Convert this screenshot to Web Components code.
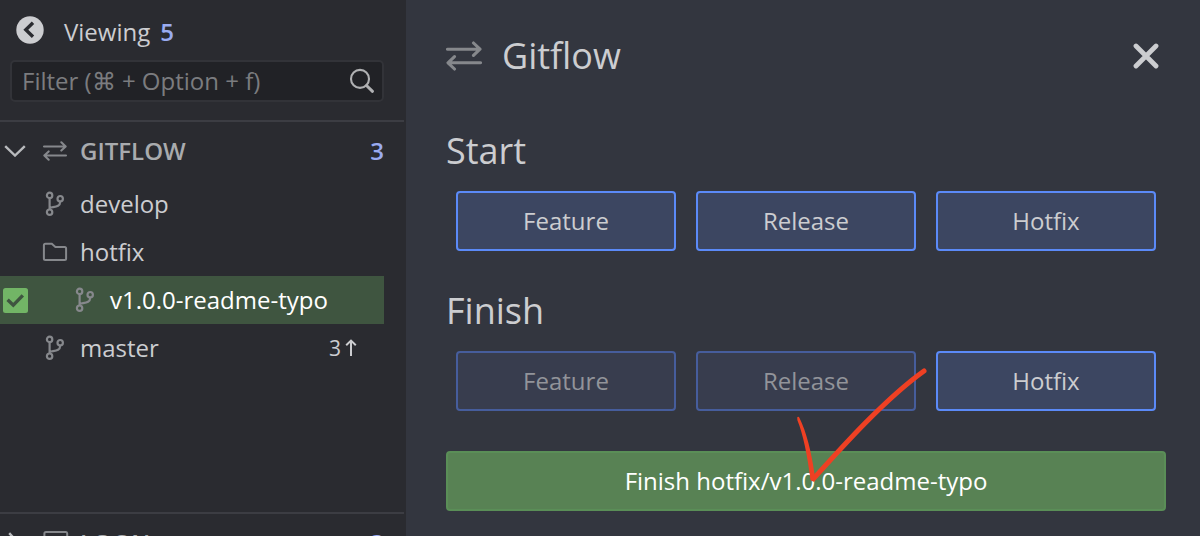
<!DOCTYPE html>
<html lang="en">
<head>
<meta charset="utf-8">
<title>Gitflow</title>
<style>
    html, body {
        margin: 0;
        height: 100%;
        overflow: hidden;
    }

    body {
        font: 24px/1 "Open Sans", "Noto Sans", sans-serif;
        color: #cccdd0;
        background: #33363f;
        --accent: #9aabf0;
        --muted: #86888c;
        --line: #3c3d43;
    }
</style>
</head>
<body>
<gitflow-app></gitflow-app>

<script>
// Icon markup, each with its own viewBox
const icons = {
    back: ['0 0 28 28', '<circle cx="14" cy="14" r="13.7" fill="currentColor"/><path d="M17 6.8 9.8 13.8l7.2 7" fill="none" stroke="#2a2b30" stroke-width="3.4"/>'],
    search: ['0 0 26 26', '<circle cx="11" cy="10.9" r="9" fill="none" stroke="currentColor" stroke-width="2.1"/><path d="m17.5 17.5 6 5.8" fill="none" stroke="currentColor" stroke-width="3" stroke-linecap="round"/>'],
    down: ['0 0 22 12', '<path d="m1.2 1.2 9.8 9.3 9.8-9.3" fill="none" stroke="currentColor" stroke-width="2.4"/>'],
    right: ['0 0 12 22', '<path d="m1.2 1.2 9.3 9.8-9.3 9.8" fill="none" stroke="currentColor" stroke-width="2.4"/>'],
    flow: ['0 0 36 30', '<path d="M1.5 8.2h32M27.5 2l6.5 6.2-6.5 6.2M34.5 21.8h-32M8.5 15.6 2 21.8 8.5 28" fill="none" stroke="currentColor" stroke-width="3.1" stroke-linecap="round" stroke-linejoin="round"/>'],
    branch: ['0 0 20 26', '<g fill="none" stroke="currentColor" stroke-width="2.2"><circle cx="4.6" cy="4.4" r="2.7"/><circle cx="4.6" cy="21.2" r="2.7"/><circle cx="15.2" cy="7.7" r="2.7"/><path d="M4.6 7.2v11.2M15.2 10.5c0 6-6 5-10.6 6.4"/></g>'],
    folder: ['0 0 26 20', '<path d="M1.9 3.2q0-1.5 1.5-1.5h6.4l3.6 3.2h9.2q1.5 0 1.5 1.5v10.2q0 1.5-1.5 1.5H3.4q-1.5 0-1.5-1.5z" fill="none" stroke="currentColor" stroke-width="2"/>'],
    monitor: ['0 0 26 24', '<path d="M3 1h20q1.2 0 1.2 1.6v13.8q0 1.6-1.6 1.6H3q-1.6 0-1.6-1.6V2.6Q1.4 1 3 1zM8 23h10M13 18v5" fill="none" stroke="currentColor" stroke-width="2"/>'],
    check: ['0 0 25 25', '<rect width="25" height="25" rx="2.5" fill="#72b566"/><path d="m4.6 11.8 5.7 5.4 9.5-9.8" fill="none" stroke="#3f5540" stroke-width="3.4"/>'],
    up: ['0 0 12 18', '<path d="M6 17V2M1.2 6.3 6 1.6l4.8 4.7" fill="none" stroke="currentColor" stroke-width="2"/>'],
    close: ['0 0 26 26', '<path d="m3 3 20 20M23 3 3 23" fill="none" stroke="currentColor" stroke-width="4.8" stroke-linecap="round"/>'],
    tick: ['0 0 136 116', '<path d="M5.2 49.6c.4-1.4 1.6-1.1 2.2.2C14.5 64 19.5 85 22.2 104l1.5 7.5c-2 2.4-5.4 1.8-5.5-1.5C15.5 88 11 66 5.4 52.200z" fill="#ef4023"/><path d="M21.300 111C50 79 93 31 132 3" fill="none" stroke="#ef4023" stroke-width="5" stroke-linecap="round"/>']
};

// Attach an open shadow root and fill it
function mount(el, css, html) {
    el.attachShadow({ mode: 'open' }).innerHTML = `<style>* { box-sizing: border-box; } ${css}</style>${html}`;
}

class UiIcon extends HTMLElement {
    constructor() {
        super();
        const [viewBox, shape] = icons[this.getAttribute('name')];
        const [, , w, h] = viewBox.split(' ');
        const width = this.getAttribute('width') || w;
        mount(this, `
            :host { display: block; flex: none; }
            svg { display: block; }
        `, `<svg width="${width}" height="${width * h / w}" viewBox="${viewBox}">${shape}</svg>`);
    }
}

// Search box with a placeholder text
class FilterBox extends HTMLElement {
    constructor() {
        super();
        mount(this, `
            :host {
                box-sizing: border-box;
                display: flex;
                flex: none;
                align-items: center;
                justify-content: space-between;
                height: 42px;
                padding: 0 7px 0 10px;
                border: 2px solid #323338;
                border-radius: 5px;
                background: #212226;
                color: #7b7c7f;
            }
            ui-icon { color: #b0b1b3; }
        `, `<span><slot></slot></span><ui-icon name="search"></ui-icon>`);
    }
}

// Collapsible section title: chevron, icon, name, count
class SectionHead extends HTMLElement {
    constructor() {
        super();
        const open = this.hasAttribute('open');
        mount(this, `
            :host {
                box-sizing: border-box;
                display: flex;
                flex: none;
                align-items: center;
                height: 60px;
                padding: 0 20px 0 4px;
                border-top: 2px solid var(--line);
                font-weight: 600;
                color: #a9abae;
            }
            .toggle { width: 39px; }
            .toggle ui-icon { margin-left: ${open ? 0 : 4}px; color: #b8babd; }
            .kind { width: 37px; color: var(--muted); }
            .name { flex: 1; }
            .count { color: var(--accent); }
        `, `
            <div class="toggle"><ui-icon name="${open ? 'down' : 'right'}"></ui-icon></div>
            <div class="kind"><ui-icon name="${this.getAttribute('icon')}" width="${this.getAttribute('icon') === 'flow' ? 24 : 26}"></ui-icon></div>
            <span class="name"><slot></slot></span>
            <span class="count">${this.getAttribute('count')}</span>
        `);
    }
}

class TreeRow extends HTMLElement {
    constructor() {
        super();
        const ahead = this.getAttribute('ahead');
        const current = this.hasAttribute('current');
        mount(this, `
            :host {
                box-sizing: border-box;
                display: flex;
                align-items: center;
                height: 48px;
                width: 384px;
                padding-left: 3px;
            }
            :host([current]) { background: #3f5540; color: #fff; }
            .mark { width: 39px; padding-top: 1px; }
            :host([current]) .mark { width: 69px; }
            .kind { width: 38px; padding-left: ${this.getAttribute('icon') === 'branch' ? 3 : 0}px; color: var(--muted); }
            .name { flex: 1; }
            .ahead { display: flex; align-items: center; gap: 4px; margin-right: 27px; font-size: 21px; }
        `, `
            <div class="mark">${current ? '<ui-icon name="check"></ui-icon>' : ''}</div>
            <div class="kind"><ui-icon name="${this.getAttribute('icon')}"></ui-icon></div>
            <span class="name"><slot></slot></span>
            ${ahead ? `<span class="ahead">${ahead}<ui-icon name="up"></ui-icon></span>` : ''}
        `);
    }
}

class SideBar extends HTMLElement {
    constructor() {
        super();
        mount(this, `
            :host {
                box-sizing: border-box;
                display: flex;
                flex-direction: column;
                flex: none;
                width: 406px;
                padding-right: 2px;
                overflow: hidden;
                background: #2a2b30;
            }
            .viewing { display: flex; flex: none; align-items: center; height: 60px; padding-left: 16px; }
            .viewing span { margin-left: 20px; padding-top: 4px; }
            .viewing b { margin-left: 10px; padding-top: 4px; font-weight: 600; color: var(--accent); }
            filter-box { margin: 0 20px 18px 10px; }
            .tree { height: 392px; flex: none; }
        `, `
            <div class="viewing"><ui-icon name="back"></ui-icon><span>Viewing</span><b>5</b></div>
            <filter-box>Filter (⌘ + Option + f)</filter-box>
            <div class="tree"><slot></slot></div>
            <slot name="next"></slot>
        `);
    }
}

class FlowButton extends HTMLElement {
    constructor() {
        super();
        mount(this, `
            :host { display: block; flex: 1; }
            button {
                display: block;
                width: 100%;
                height: 60px;
                padding: 0;
                font: inherit;
                color: inherit;
                border: 2px solid #5b8af8;
                border-radius: 4px;
                background: #3c4661;
            }
            :host([disabled]) button { border-color: #465d9c; background: #383d4e; color: #92949a; }
            :host([primary]) button { border-color: #5a8e57; background: #588254; color: #fff; }
        `, `<button><slot></slot></button>`);
    }
}

// Titled group of buttons
class ActionGroup extends HTMLElement {
    constructor() {
        super();
        mount(this, `
            :host { display: block; height: 160px; }
            h2 { margin: 0; height: 80px; font-size: 36px; line-height: 80px; font-weight: 400; }
            .buttons { display: flex; gap: 20px; padding: 0 10px; }
        `, `<h2>${this.getAttribute('heading')}</h2><div class="buttons"><slot></slot></div>`);
    }
}

class GitflowPanel extends HTMLElement {
    constructor() {
        super();
        mount(this, `
            :host { display: block; flex: 1; padding: 0 34px 0 40px; }
            header { display: flex; align-items: center; height: 111px; font-size: 36px; }
            header ui-icon { color: #86888c; }
            h1 { flex: 1; margin: 0 0 0 20px; font-size: 36px; font-weight: 400; }
            header ui-icon[name=close] { margin-right: 7px; color: #cccdd0; }
            .finish { position: relative; padding-top: 20px; }
            /* hand-drawn tick over the buttons */
            .finish > ui-icon { position: absolute; left: 346px; top: -63px; pointer-events: none; }
        `, `
            <header><ui-icon name="flow"></ui-icon><h1>Gitflow</h1><ui-icon name="close"></ui-icon></header>
            <slot></slot>
            <div class="finish"><slot name="finish"></slot><ui-icon name="tick"></ui-icon></div>
        `);
    }
}

class GitflowApp extends HTMLElement {
    constructor() {
        super();
        mount(this, `
            :host { display: flex; height: 536px; overflow: hidden; }
        `, `
            <side-bar>
                <section-head open icon="flow" count="3">GITFLOW</section-head>
                <tree-row icon="branch">develop</tree-row>
                <tree-row icon="folder">hotfix</tree-row>
                <tree-row icon="branch" current>v1.0.0-readme-typo</tree-row>
                <tree-row icon="branch" ahead="3">master</tree-row>
                <section-head slot="next" icon="monitor" count="3">LOCAL</section-head>
            </side-bar>
            <gitflow-panel>
                <action-group heading="Start">
                    <flow-button>Feature</flow-button>
                    <flow-button>Release</flow-button>
                    <flow-button>Hotfix</flow-button>
                </action-group>
                <action-group heading="Finish">
                    <flow-button disabled>Feature</flow-button>
                    <flow-button disabled>Release</flow-button>
                    <flow-button>Hotfix</flow-button>
                </action-group>
                <flow-button slot="finish" primary>Finish hotfix/v1.0.0-readme-typo</flow-button>
            </gitflow-panel>
        `);
    }
}

customElements.define('ui-icon', UiIcon);
customElements.define('filter-box', FilterBox);
customElements.define('section-head', SectionHead);
customElements.define('tree-row', TreeRow);
customElements.define('side-bar', SideBar);
customElements.define('flow-button', FlowButton);
customElements.define('action-group', ActionGroup);
customElements.define('gitflow-panel', GitflowPanel);
customElements.define('gitflow-app', GitflowApp);
</script>
</body>
</html>
